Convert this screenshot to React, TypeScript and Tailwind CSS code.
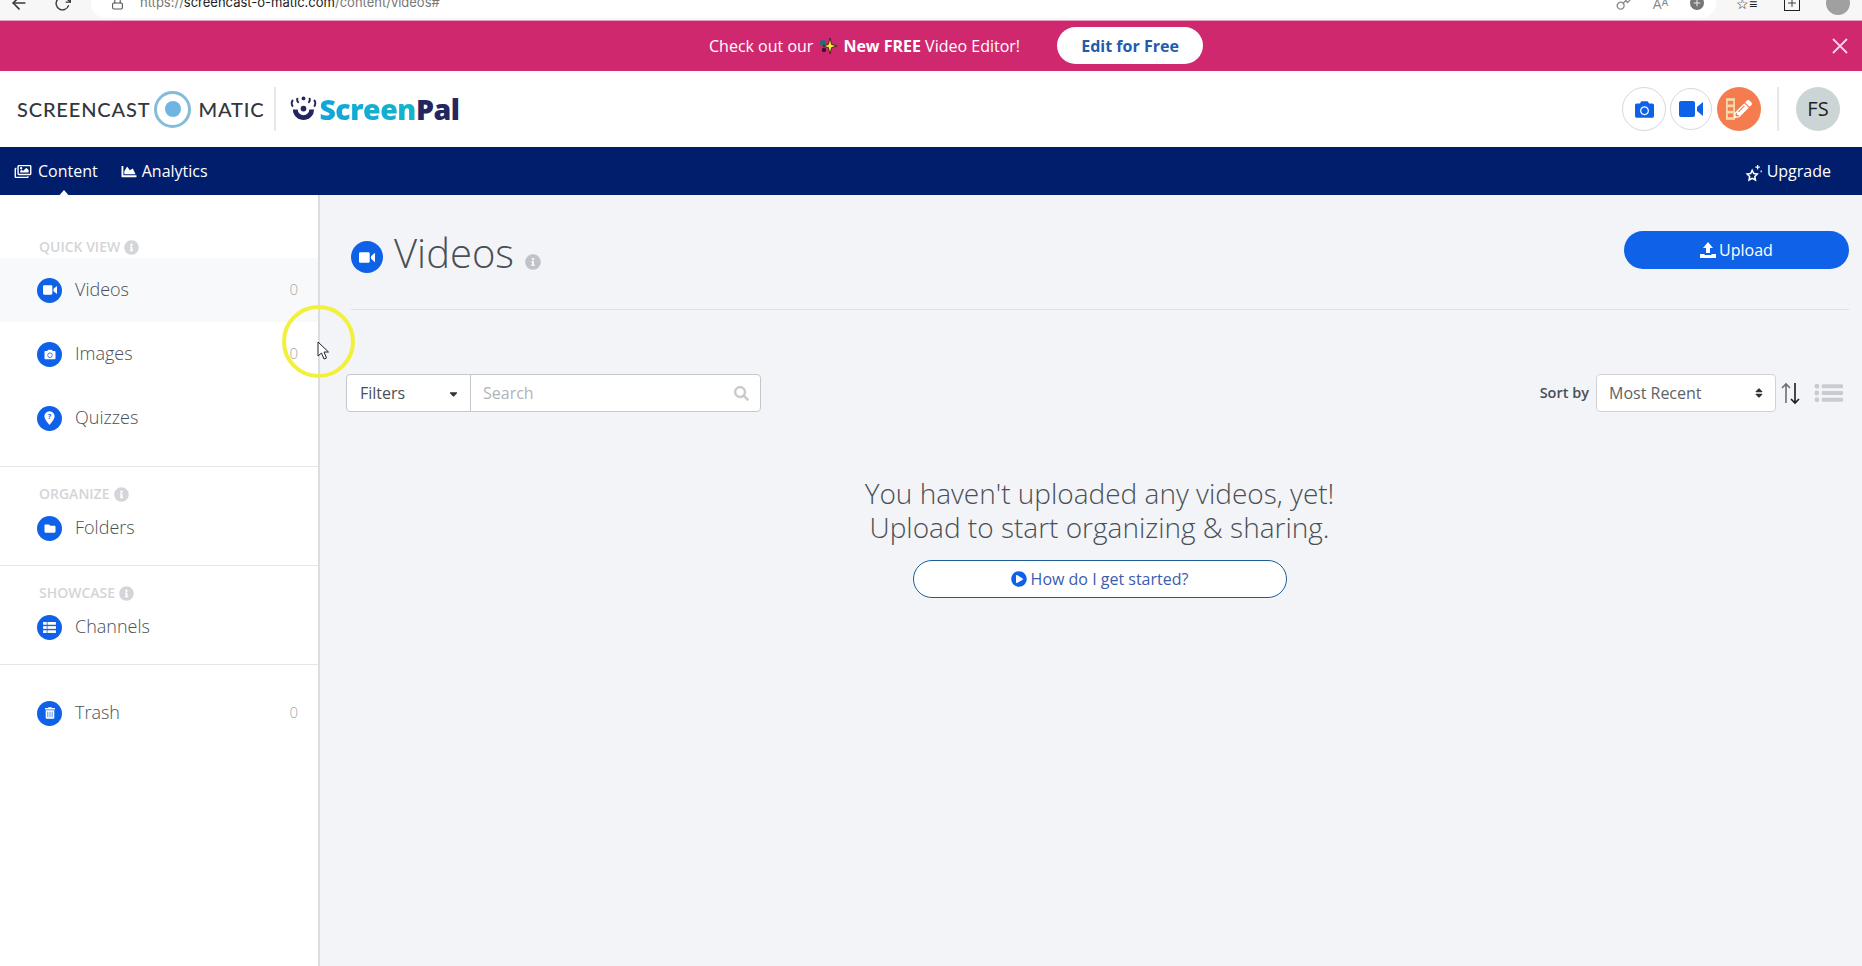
import React from "react";
import { FaCamera, FaInfoCircle, FaFolder, FaTrashAlt, FaPlayCircle, FaSearch, FaRegImages, FaChartArea, FaPencilAlt, FaSortDown, FaSort } from "react-icons/fa";
import { FiRotateCw, FiArrowLeft, FiLock, FiKey, FiPlus } from "react-icons/fi";

const VideoIcon = ({ className }: { className: string }) => (
  <svg viewBox="0 0 24 16" className={className} fill="currentColor">
    <rect x="0" y="0" width="16" height="16" rx="2" />
    <path d="M18 6l6-5v14l-6-5z" />
  </svg>
);
const QuizIcon = () => (
  <svg viewBox="0 0 12 15" className="w-[11px] h-[14px]">
    <path d="M6 0a5.6 5.6 0 0 0-5.6 5.6C.4 9.2 6 15 6 15s5.6-5.8 5.6-9.4A5.6 5.6 0 0 0 6 0z" fill="#fff" />
    <text x="6" y="8.6" textAnchor="middle" fontSize="8" fontWeight="700" fill="#0f62e8" fontFamily="'Open Sans', sans-serif">?</text>
  </svg>
);
const ListIcon = () => (
  <svg viewBox="0 0 14 12" className="w-[13px] h-[11px]" fill="#fff">
    <rect x="0" y="0" width="14" height="3" />
    <rect x="0" y="4.5" width="14" height="3" />
    <rect x="0" y="9" width="14" height="3" />
    <rect x="4" y="0" width="0.8" height="12" fill="#0f62e8" />
  </svg>
);

function Round({ children, size = "w-[25px] h-[25px]" }: { children: React.ReactNode; size?: string }) {
  return <span className={`${size} shrink-0 rounded-full bg-[#0f62e8] flex items-center justify-center text-white`}>{children}</span>;
}

function Label({ text }: { text: string }) {
  return (
    <div className="flex items-center gap-[4px] pl-[39px] h-[16px] text-[14px] font-semibold text-[#d3d5d8] leading-none">
      <span>{text}</span>
      <FaInfoCircle className="text-[#d3d5d8] w-[15px] h-[15px]" />
    </div>
  );
}

function Row({ icon, text, count, active }: { icon: React.ReactNode; text: string; count?: string; active?: boolean }) {
  return (
    <div className={`flex items-center h-[64px] pl-[37px] pr-[20px] ${active ? "bg-[#f7f9fb]" : ""}`}>
      <Round>{icon}</Round>
      <span className="ml-[13px] text-[18px] font-light text-[#4a4f55] leading-none -mt-[2px]">{text}</span>
      {count && <span className="ml-auto text-[15px] font-light text-[#a4a8ac] -mt-[2px]">{count}</span>}
    </div>
  );
}

export default function App() {
  return (
    <div className="relative w-[1862px] h-[966px] overflow-hidden bg-[#f3f4f8] font-['Open_Sans',sans-serif] flex flex-col">
      {/* browser chrome, cropped at the top */}
      <div className="h-[20px] shrink-0 bg-[#f7f7f7] overflow-hidden">
        <div className="-mt-[14px] h-[34px] flex items-center text-[#3a3a3a]">
          <FiArrowLeft className="ml-[9px] w-[20px] h-[20px]" />
          <FiRotateCw className="ml-[25px] w-[17px] h-[17px]" />
          <div className="ml-[20px] w-[1625px] h-[30px] rounded-[16px] bg-white flex items-center pl-[20px]">
            <FiLock className="w-[13px] h-[13px] text-[#555]" />
            <span className="ml-[16px] text-[13px] font-['Inter',sans-serif] text-[#777]">
              https://<span className="text-[#222]">screencast-o-matic.com</span>/content/videos#
            </span>
            <div className="ml-auto flex items-center gap-[22px] pr-[12px] text-[#888]">
              <FiKey className="w-[15px] h-[15px]" />
              <span className="text-[14px]">Aᴬ</span>
              <span className="w-[14px] h-[14px] rounded-full bg-[#777] text-white flex items-center justify-center"><FiPlus className="w-[10px] h-[10px]" /></span>
            </div>
          </div>
          <span className="ml-[20px] text-[14px] text-[#222]">☆≡</span>
          <span className="ml-[27px] w-[16px] h-[16px] border border-[#222] flex items-center justify-center"><FiPlus className="w-[12px] h-[12px]" /></span>
          <span className="ml-[26px] w-[24px] h-[24px] rounded-full bg-[#a0a0a0]" />
        </div>
      </div>

      {/* promo */}
      <div className="h-[51px] shrink-0 bg-[#d0286f] border-t border-[#e5a0bd] relative flex items-center">
        <span className="ml-[709px] flex items-center text-[16px] text-white whitespace-nowrap leading-none">
          Check out our
          <svg viewBox="0 0 18 18" className="mx-[6px] w-[18px] h-[18px]">
            <circle cx="4" cy="6" r="3" fill="#1f6f78" />
            <circle cx="5" cy="13" r="2.2" fill="#3a1030" />
            <path d="M11 1l1.6 6.4L18 9l-5.4 1.6L11 17l-1.6-6.4L4 9l5.4-1.6z" fill="#f9ec3a" stroke="#1c1c1c" strokeWidth="0.8" />
          </svg>
          <b className="font-bold">New FREE</b>&nbsp;Video Editor!
        </span>
        <span className="ml-[37px] w-[146px] h-[37px] -mt-[1px] rounded-full bg-white flex items-center justify-center text-[16px] font-bold text-[#1f5cab]">Edit for Free</span>
        <svg viewBox="0 0 16 16" className="ml-auto mr-[14px] w-[16px] h-[16px]" stroke="#fbd3e4" strokeWidth="1.8"><path d="M1 1l14 14M15 1L1 15" /></svg>
      </div>

      {/* logo header */}
      <div className="h-[76px] shrink-0 bg-white flex items-center">
        <span className="ml-[17px] font-['Lato',sans-serif] font-medium text-[20px] tracking-[0.85px] text-[#33363a] leading-none">SCREENCAST</span>
        <span className="ml-[4px] w-[37px] h-[37px] rounded-full border-[3px] border-[#84bcd9] flex items-center justify-center">
          <span className="w-[16px] h-[16px] rounded-full bg-[#6fb4e3]" />
        </span>
        <span className="ml-[7px] font-['Lato',sans-serif] font-medium text-[20px] tracking-[0.85px] text-[#33363a] leading-none">MATIC</span>
        <span className="ml-[10px] w-[2px] h-[44px] bg-[#e6e8ea]" />
        <svg viewBox="0 0 28 28" className="ml-[14px] w-[27px] h-[27px]" fill="#23265f">
          <path d="M3 14h5a6 6 0 0 0 12 0h5a11 11 0 0 1-22 0z" />
          <path d="M8 20a9 9 0 0 0 12 0v3a9 5 0 0 1-12 0z" />
          <circle cx="14" cy="13" r="3" />
          <circle cx="14" cy="2.5" r="2" />
          <path d="M3 4a6 6 0 0 0 0 7M25 4a6 6 0 0 1 0 7M8 2a4 4 0 0 0 1 5M20 2a4 4 0 0 1-1 5" stroke="#23265f" strokeWidth="2" fill="none" />
        </svg>
        <span className="ml-[2px] text-[28.5px] font-extrabold leading-none tracking-[-0.5px] font-['Open_Sans',sans-serif]">
          <span className="bg-gradient-to-r from-[#12a5d8] to-[#15b5c9] bg-clip-text text-transparent">Screen</span>
          <span className="text-[#23265f]">Pal</span>
        </span>
        <div className="ml-auto flex items-center">
          <span className="w-[44px] h-[44px] rounded-full border border-[#d8d8d8] flex items-center justify-center text-[#0f62e8]"><FaCamera className="w-[21px] h-[19px]" /></span>
          <span className="ml-[4px] w-[42px] h-[42px] rounded-full border border-[#d8d8d8] flex items-center justify-center text-[#0f62e8]"><VideoIcon className="w-[24px] h-[16px]" /></span>
          <span className="ml-[5px] w-[44px] h-[44px] rounded-full bg-[#f47c4e] flex items-center justify-center relative">
            <svg viewBox="0 0 10 24" className="w-[9px] h-[24px] -mr-[1px]" fill="#f6d9a8"><rect width="10" height="24" /><g fill="#f47c4e"><rect x="2" y="3" width="6" height="4" /><rect x="2" y="10" width="6" height="4" /><rect x="2" y="17" width="6" height="4" /></g></svg>
            <FaPencilAlt className="text-white w-[18px] h-[18px]" />
          </span>
          <span className="ml-[16px] w-[2px] h-[44px] bg-[#e6e8ea]" />
          <span className="ml-[17px] mr-[22px] w-[44px] h-[44px] rounded-full bg-[#ccd5d5] flex items-center justify-center text-[20px] text-[#222] font-normal">FS</span>
        </div>
      </div>

      {/* nav */}
      <div className="h-[48px] shrink-0 bg-[#001e6c] flex items-center text-white text-[16px] relative">
        <span className="ml-[14px] flex items-center gap-[6px] relative">
          <FaRegImages className="w-[18px] h-[15px]" /><span>Content</span>
          <span className="absolute left-[43px] -bottom-[15px] w-0 h-0 border-x-[7px] border-x-transparent border-b-[8px] border-b-white" />
        </span>
        <span className="ml-[23px] flex items-center gap-[5px]">
          <FaChartArea className="w-[16px] h-[15px]" /><span>Analytics</span>
        </span>
        <span className="ml-auto mr-[31px] flex items-center gap-[4px]">
          <svg viewBox="0 0 20 20" className="w-[18px] h-[18px] mt-[3px]" fill="none" stroke="#fff" strokeWidth="1.7">
            <path d="M8 7l1.8 3.6 3.9.6-2.8 2.7.7 3.9L8 15.9 4.5 17.8l.7-3.9-2.8-2.7 3.9-.6z" />
            <path d="M14 1v5M11.5 3.5h5M18 7.2v2" strokeWidth="1.4" />
          </svg>
          <span>Upgrade</span>
        </span>
      </div>

      {/* body */}
      <div className="flex-1 flex min-h-0">
        <aside className="w-[318px] shrink-0 bg-white border-r-[2px] border-[#dcdde0] box-content">
          <div className="pt-[44px] h-[272px] border-b border-[#e4e6e8]">
            <Label text="QUICK VIEW" />
            <div className="mt-[3px]">
              <Row active icon={<VideoIcon className="w-[14px] h-[10px]" />} text="Videos" count="0" />
              <Row icon={<FaCamera className="w-[12px] h-[11px]" />} text="Images" count="0" />
              <Row icon={<QuizIcon />} text="Quizzes" />
            </div>
          </div>
          <div className="pt-[19px] h-[99px] border-b border-[#e4e6e8]">
            <Label text="ORGANIZE" />
            <div className="-mt-[6px]"><Row icon={<FaFolder className="w-[12px] h-[11px]" />} text="Folders" /></div>
          </div>
          <div className="pt-[19px] h-[99px] border-b border-[#e4e6e8]">
            <Label text="SHOWCASE" />
            <div className="-mt-[6px]"><Row icon={<ListIcon />} text="Channels" /></div>
          </div>
          <div className="pt-[16px]">
            <Row icon={<FaTrashAlt className="w-[10px] h-[12px]" />} text="Trash" count="0" />
          </div>
        </aside>

        <main className="flex-1 pl-[31px] pr-[13px] min-w-0">
          <div className="h-[115px] border-b border-[#dfe0e4] flex items-start">
            <div className="mt-[46px]"><Round size="w-[32px] h-[32px]"><VideoIcon className="w-[16px] h-[11px]" /></Round></div>
            <h1 className="ml-[11px] mt-[31px] text-[40px] font-light leading-[54px] text-[#4a4f55]">Videos</h1>
            <FaInfoCircle className="ml-[11px] mt-[59px] w-[16px] h-[16px] text-[#bfc3c9]" />
            <span className="ml-auto mt-[36px] w-[225px] h-[38px] rounded-full bg-[#0f62e8] text-white text-[16px] flex items-center justify-center gap-[3px]">
              <svg viewBox="0 0 16 16" className="w-[16px] h-[16px]" fill="#fff"><path d="M8 0l5 6h-3v5H6V6H3z" /><path d="M0 12h4.5v1h7v-1H16v4H0z" /></svg>
              Upload
            </span>
          </div>

          <div className="mt-[64px] -ml-[5px] flex items-center">
            <div className="w-[415px] h-[38px] flex rounded-[4px] border border-[#c4c7cb] bg-white overflow-hidden">
              <div className="w-[124px] border-r border-[#c4c7cb] flex items-center pl-[13px] pr-[10px] text-[16px] text-[#4a4f55]">
                Filters<FaSortDown className="ml-auto -mt-[4px] w-[13px] h-[13px] text-[#333]" />
              </div>
              <div className="flex-1 flex items-center pl-[12px] pr-[11px] text-[16px] text-[#b0b3b7]">
                Search<FaSearch className="ml-auto w-[15px] h-[15px] text-[#c8cacc]" />
              </div>
            </div>
            <span className="ml-auto text-[14.5px] font-semibold text-[#4a4f55]">Sort by</span>
            <div className="ml-[7px] w-[180px] h-[38px] rounded-[4px] border border-[#d0d2d6] bg-white flex items-center pl-[12px] pr-[11px] text-[16px] text-[#5d6266]">
              Most Recent<FaSort className="ml-auto w-[10px] h-[12px] text-[#333]" />
            </div>
            <svg viewBox="0 0 24 24" className="ml-[3px] w-[24px] h-[24px]" fill="none" strokeWidth="1.6">
              <path d="M7 22V3M3 7l4-4 4 4" stroke="#6a6f75" />
              <path d="M16 2v20M12 18l4 4 4-4" stroke="#1c1c1c" />
            </svg>
            <svg viewBox="0 0 30 20" className="ml-[11px] mr-[6px] w-[29px] h-[20px]" fill="#c9cbd2">
              <circle cx="3" cy="3" r="2.5" /><rect x="8" y="1" width="22" height="4" rx="1" />
              <circle cx="3" cy="10" r="2.5" /><rect x="8" y="8" width="22" height="4" rx="1" />
              <circle cx="3" cy="17" r="2.5" /><rect x="8" y="15" width="22" height="4" rx="1" />
            </svg>
          </div>

          <div className="mt-[64px] flex flex-col items-center pr-[1px]">
            <p className="text-[28px] leading-[34px] font-light text-[#4a4f55] text-center">
              You haven't uploaded any videos, yet!<br />Upload to start organizing &amp; sharing.
            </p>
            <span className="mt-[16px] w-[374px] h-[38px] rounded-full border border-[#1d5c94] bg-white flex items-center justify-center gap-[4px] text-[16px] text-[#3c5cb0]">
              <FaPlayCircle className="w-[16px] h-[16px] text-[#0f62e8]" />How do I get started?
            </span>
          </div>
        </main>
      </div>

      {/* recorded cursor highlight */}
      <div className="absolute left-[282px] top-[305px] w-[73px] h-[73px] rounded-full border-[4px] border-[#f2f03a] pointer-events-none" />
      <svg viewBox="0 0 12 19" className="absolute left-[317px] top-[341px] w-[12px] h-[19px] pointer-events-none" fill="#fff" stroke="#222" strokeWidth="1">
        <path d="M1 1v14l3.5-3 2.5 6 2.5-1-2.5-6h4.5z" />
      </svg>
    </div>
  );
}
